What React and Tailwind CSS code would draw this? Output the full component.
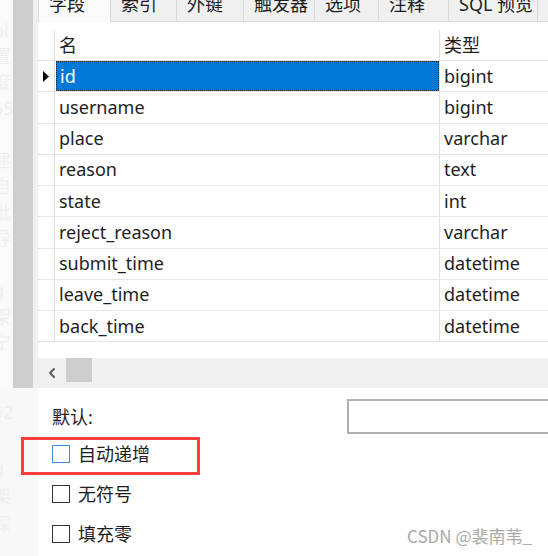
import { ChevronLeft } from 'lucide-react';

const tabs = [
  { label: '字段', w: 'w-[73px]', active: true },
  { label: '索引', w: 'w-[66px]' },
  { label: '外键', w: 'w-[67px]' },
  { label: '触发器', w: 'w-[71px]' },
  { label: '选项', w: 'w-[64px]' },
  { label: '注释', w: 'w-[70px]' },
  { label: 'SQL 预览', w: 'w-[89px]' },
  { label: '', w: 'w-[20px]' },
];

const fields = [
  ['id', 'bigint'],
  ['username', 'bigint'],
  ['place', 'varchar'],
  ['reason', 'text'],
  ['state', 'int'],
  ['reject_reason', 'varchar'],
  ['submit_time', 'datetime'],
  ['leave_time', 'datetime'],
  ['back_time', 'datetime'],
];

const ghost = ['ol', '置', '度', '55', '', '建', '自', '批', '导', '', 'g', '架', '宁'];

const Checkbox = ({ label, focus }) => (
  <div className="h-[40px] flex items-center gap-[8px]">
    <div className={`w-[18px] h-[18px] bg-white border-[1.5px] ${focus ? 'border-[#3a8ee6]' : 'border-[#333333]'}`}></div>
    <span className="text-[18px] leading-none text-[#1e1e1e]">{label}</span>
  </div>
);

const App = () => {
  return (
    <div className="relative w-[548px] h-[556px] flex overflow-hidden bg-white font-['Noto_Sans','Noto_Sans_CJK_SC',sans-serif]">

      <div className="w-[38px] flex flex-col shrink-0">
        <div className="h-[388px] flex">
          <div className="w-[13px] bg-[#fafafa] overflow-hidden flex flex-col pt-[20px] gap-[6px]">
            {ghost.map((g, i) => (
              <span key={i} className="h-[20px] -ml-[7px] text-[18px] leading-[20px] text-[#efefef] whitespace-nowrap">{g}</span>
            ))}
          </div>
          <div className="w-[20px] bg-[#cdcdcd]"></div>
          <div className="w-[5px] bg-[#f0f0f0]"></div>
        </div>
        <div className="flex-1 bg-[#f8f8f8] overflow-hidden flex flex-col pt-[14px] gap-[8px]">
          {['92', '', 'g', '架', '深'].map((g, i) => (
            <span key={i} className="h-[20px] -ml-[7px] text-[18px] leading-[20px] text-[#efefef]">{g}</span>
          ))}
        </div>
      </div>

      <div className="flex-1 flex flex-col min-w-0">
        <div className="h-[22px] flex overflow-hidden shrink-0">
          {tabs.map((t, i) => (
            <div
              key={i}
              className={`${t.w} shrink-0 h-full pl-[10px] border-r border-[#d9d9d9] ${t.active ? 'bg-[#fafafa] border-l' : 'bg-[#f0f0f0] border-b'}`}
            >
              <div className="-mt-[5px] text-[18px] leading-[18px] text-[#1e1e1e] whitespace-nowrap">{t.label}</div>
            </div>
          ))}
        </div>

        <div className="h-[366px] flex flex-col shrink-0">
          <div className="h-[8px]"></div>
          <div className="h-[31px] grid grid-cols-[17px_385px_1fr] border-b border-[#e3e3e3]">
            <div className="border-r border-[#e0e0e0]"></div>
            <div className="border-r border-[#e0e0e0] pl-[4px] flex items-center text-[18px] text-[#1e1e1e]">名</div>
            <div className="pl-[4px] flex items-center text-[18px] text-[#1e1e1e]">类型</div>
          </div>
          {fields.map(([name, type], i) => (
            <div key={name} className="h-[31.25px] grid grid-cols-[17px_385px_1fr] border-b border-[#e6e6e6]">
              <div className="border-r border-[#e0e0e0] flex items-center justify-center">
                {i === 0 && (
                  <svg width="6" height="11" viewBox="0 0 6 11"><polygon points="0,0 6,5.5 0,11" fill="#000" /></svg>
                )}
              </div>
              <div className="border-r border-[#e0e0e0] flex">
                {i === 0 ? (
                  <div className="flex-1 ml-[1px] bg-[#0078d7] border border-dotted border-[#2a2a2a] pl-[3px] flex items-center text-[18px] text-white">{name}</div>
                ) : (
                  <div className="flex-1 pl-[4px] flex items-center text-[18px] text-[#1e1e1e]">{name}</div>
                )}
              </div>
              <div className="pl-[4px] flex items-center text-[18px] text-[#1e1e1e]">{type}</div>
            </div>
          ))}
          <div className="flex-1"></div>
          <div className="h-[30px] bg-[#f0f0f0] flex items-start">
            <div className="w-[28px] h-[30px] flex items-center justify-center">
              <ChevronLeft size={16} strokeWidth={3} className="text-[#5a5a5a]" />
            </div>
            <div className="w-[26px] h-[24px] bg-[#cdcdcd]"></div>
          </div>
        </div>

        <div className="flex-1 flex flex-col pl-[14px]">
          <div className="mt-[11px] h-[35px] flex items-center">
            <span className="text-[18px] leading-none text-[#1e1e1e]">默认:</span>
            <div className="ml-auto w-[201px] h-[35px] border-2 border-r-0 border-[#b0b0b0] bg-white"></div>
          </div>
          <Checkbox label="自动递增" focus />
          <Checkbox label="无符号" />
          <Checkbox label="填充零" />
        </div>
      </div>

      <div className="absolute left-[21px] top-[437px] w-[179px] h-[38px] border-[3px] border-[#ff3d3d]"></div>

      <div className="absolute right-[16px] bottom-[12px] text-[17px] leading-none text-[#a9a9a9] font-['Noto_Sans_CJK_SC',sans-serif]">
        CSDN @裴南苇_
      </div>
    </div>
  );
};

export default App;
